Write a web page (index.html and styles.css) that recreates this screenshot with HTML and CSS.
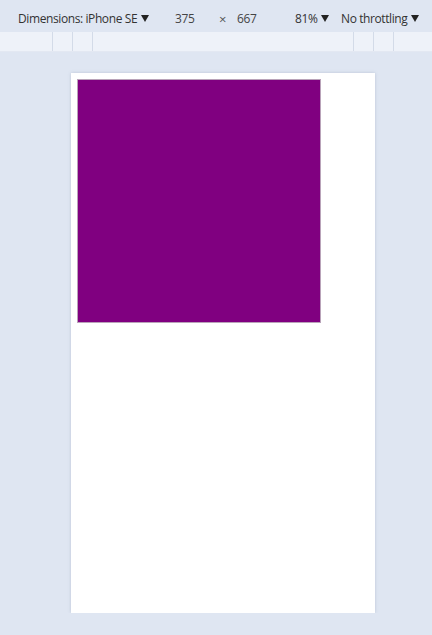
FILE: index.html
```html
<!DOCTYPE html>
<html>
<head>
<meta charset="utf-8">
<link rel="stylesheet" href="styles.css">
</head>
<body>
<div class="toolbar">
  <span class="dim">Dimensions: iPhone SE<span class="caret"></span></span>
  <span class="w">375</span>
  <span class="x">×</span>
  <span class="h">667</span>
  <span class="zoom">81%<span class="caret"></span></span>
  <span class="thr">No throttling<span class="caret"></span></span>
</div>
<div class="ruler">
  <div class="marks left"><span class="seg"></span><span class="seg"></span><span class="seg last"></span></div>
  <div class="marks right"><span class="seg"></span><span class="seg"></span><span class="seg last"></span></div>
</div>
<div class="stage">
  <div class="device">
    <div class="box"></div>
  </div>
</div>
</body>
</html>
```
FILE: styles.css
```css
html, body {
  margin: 0;
  padding: 0;
  background: #dfe6f2;
  font-family: "Open Sans", "Noto Sans", sans-serif;
  font-size: 12px;
  color: #333;
}
.toolbar {
  height: 32px;
  padding-top: 5px;
  box-sizing: border-box;
  display: flex;
  align-items: center;
  background: #dfe6f2;
  white-space: nowrap;
  letter-spacing: -0.4px;
}
.caret {
  display: inline-block;
  width: 0;
  height: 0;
  border-left: 4px solid transparent;
  border-right: 4px solid transparent;
  border-top: 7px solid #222;
  margin-left: 4px;
  vertical-align: 1px;
}
.dim { margin-left: 18px; width: 157px; }
.w { width: 44px; color: #444; }
.x { width: 18px; color: #555; font-size: 13px; }
.h { width: 58px; color: #444; }
.zoom { width: 46px; }
.ruler {
  height: 20px;
  background: #eef2f9;
  display: flex;
  justify-content: space-between;
  border-bottom: 1px solid #e3e8f2;
  box-sizing: border-box;
}
.marks { display: flex; height: 100%; }
.marks.left { margin-left: 52px; }
.marks.right { margin-right: 38px; }
.seg {
  width: 20px;
  height: 100%;
  border-left: 1px solid #d3dbe8;
  box-sizing: border-box;
}
.seg.last { width: 1px; }
.stage {
  padding-top: 21px;
  padding-left: 71px;
}
.device {
  width: 304px;
  height: 540px;
  background: #fff;
  box-shadow: 0 0 3px rgba(120, 135, 165, 0.35);
  padding: 6px;
  box-sizing: border-box;
}
.box {
  width: 244px;
  height: 244px;
  background: #800080;
  border: 1px solid #b9a3b9;
  box-sizing: border-box;
}
```
